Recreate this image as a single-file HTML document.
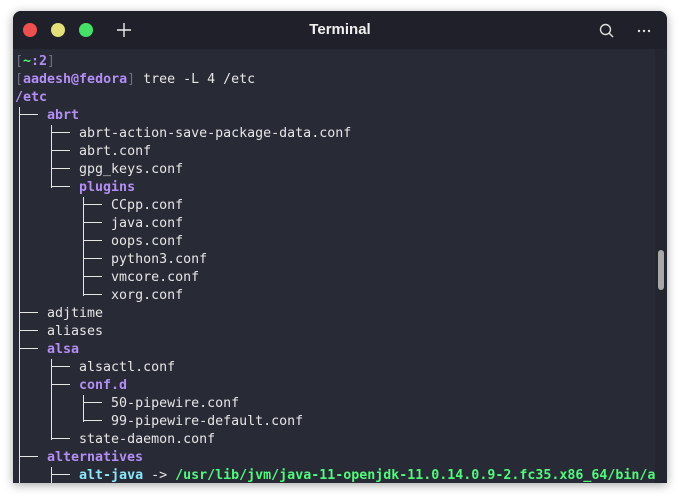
<!DOCTYPE html>
<html><head><meta charset="utf-8"><style>
html,body{margin:0;padding:0;width:680px;height:498px;background:#fff;overflow:hidden}
.win{position:absolute;left:13px;top:11px;width:654px;height:472px;background:#282a36;border-radius:8px 8px 0 0;overflow:hidden;box-shadow:0 2px 10px rgba(0,0,0,.35)}
.tb{position:absolute;left:0;top:0;width:654px;height:38px;background:#1f2029}
.dot{position:absolute;top:12px;width:14px;height:14px;border-radius:50%}
.title{position:absolute;left:0;right:0;top:0;font:bold 15px "Liberation Sans",sans-serif;line-height:38px;text-align:center;color:#f0f0f0}
.sb{position:absolute;right:0;top:38px;width:12px;bottom:0;background:#23252f}
.thumb{position:absolute;left:645px;top:239px;width:6px;height:40px;background:#a8a8a8;border-radius:3px}
pre{position:absolute;left:2px;top:42px;margin:0;font:13.3px "DejaVu Sans Mono","Liberation Mono",monospace;line-height:18px;color:#e6e6e6;white-space:pre}
.p{color:#b48ef5;font-weight:bold}.g{color:#6b6e84}.gr{color:#50fa7b;font-weight:bold}.c{color:#8be9fd;font-weight:bold}
.v{position:absolute;width:1px;background:#e6e6e6}
.h{display:inline-block;width:19px;height:1px;background:#e6e6e6;vertical-align:middle;margin-left:4px;margin-right:9px;position:relative;top:-1px}
</style></head><body>
<div class="win">
<div class="tb">
<div class="dot" style="left:10px;background:#ee5050"></div>
<div class="dot" style="left:38px;background:#e3e07a"></div>
<div class="dot" style="left:66px;background:#45e068"></div>
<svg style="position:absolute;left:104px;top:12px" width="14" height="14"><path d="M7 0V14M0 7H14" stroke="#eee" stroke-width="1.4"/></svg>
<div class="title">Terminal</div>
<svg style="position:absolute;left:586px;top:12px" width="16" height="16"><circle cx="6.5" cy="6.5" r="5" fill="none" stroke="#ddd" stroke-width="1.4"/><path d="M10 10L14 14" stroke="#ddd" stroke-width="1.5"/></svg>
<svg style="position:absolute;left:624px;top:18px" width="16" height="4"><circle cx="2" cy="2" r="1.2" fill="#ddd"/><circle cx="7" cy="2" r="1.2" fill="#ddd"/><circle cx="12" cy="2" r="1.2" fill="#ddd"/></svg>
</div>
<div class="sb"></div><div class="thumb"></div>
<pre><span class="g">[</span><span class="gr">~</span><span class="p">:2</span><span class="g">]</span>
<span class="g">[</span><span class="p">aadesh@fedora</span><span class="g">]</span> tree -L 4 /etc
<span class="p">/etc</span>
<i class="h"></i><span class="p">abrt</span>
    <i class="h"></i>abrt-action-save-package-data.conf
    <i class="h"></i>abrt.conf
    <i class="h"></i>gpg_keys.conf
    <i class="h"></i><span class="p">plugins</span>
        <i class="h"></i>CCpp.conf
        <i class="h"></i>java.conf
        <i class="h"></i>oops.conf
        <i class="h"></i>python3.conf
        <i class="h"></i>vmcore.conf
        <i class="h"></i>xorg.conf
<i class="h"></i>adjtime
<i class="h"></i>aliases
<i class="h"></i><span class="p">alsa</span>
    <i class="h"></i>alsactl.conf
    <i class="h"></i><span class="p">conf.d</span>
        <i class="h"></i>50-pipewire.conf
        <i class="h"></i>99-pipewire-default.conf
    <i class="h"></i>state-daemon.conf
<i class="h"></i><span class="p">alternatives</span>
    <i class="h"></i><span class="c">alt-java</span> -&gt; <span class="gr">/usr/lib/jvm/java-11-openjdk-11.0.14.0.9-2.fc35.x86_64/bin/a</span></pre>
<div class="v" style="left:6px;top:96px;height:376px"></div>
<div class="v" style="left:38px;top:114px;height:63px"></div>
<div class="v" style="left:38px;top:348px;height:81px"></div>
<div class="v" style="left:38px;top:456px;height:16px"></div>
<div class="v" style="left:70px;top:186px;height:99px"></div>
<div class="v" style="left:70px;top:384px;height:27px"></div>
</div>
</body></html>
